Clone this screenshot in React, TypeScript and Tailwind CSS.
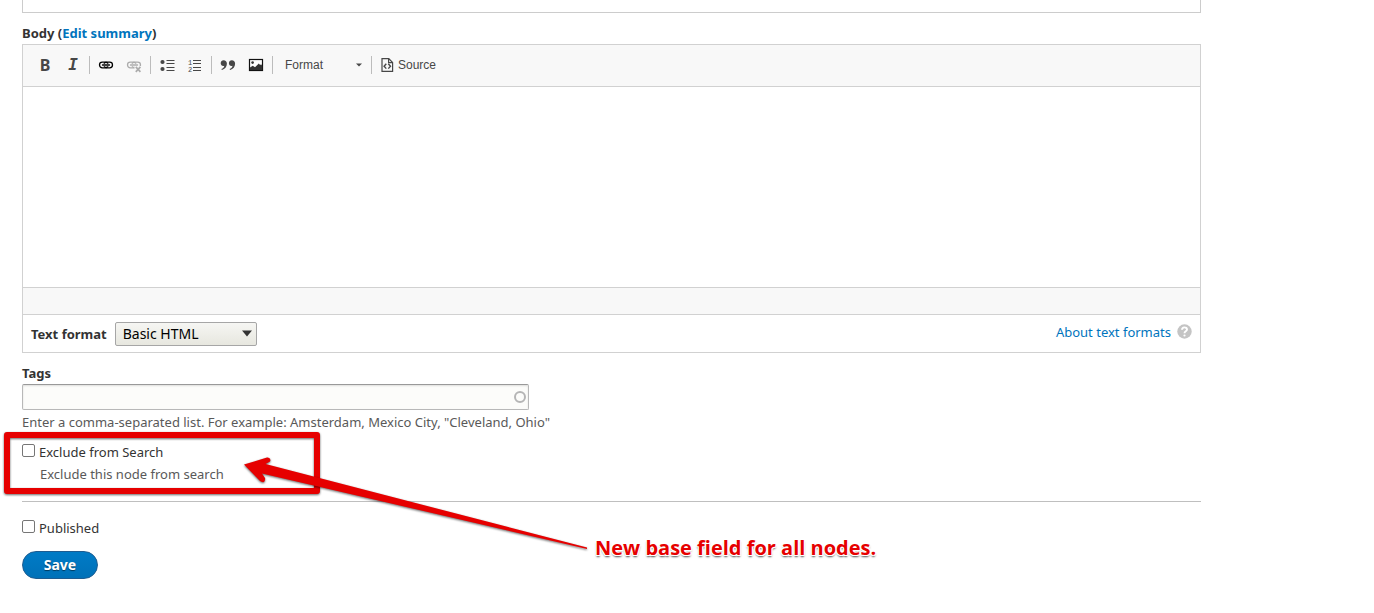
import { useState } from 'react';
import type { ReactNode } from 'react';

interface ToolButtonProps {
  label: string;
  disabled?: boolean;
  children: ReactNode;
}

function ToolButton({ label, disabled, children }: ToolButtonProps) {
  return (
    <button
      type="button"
      aria-label={label}
      disabled={disabled}
      className="flex h-7 w-7 items-center justify-center text-[#474747] disabled:opacity-30"
    >
      {children}
    </button>
  );
}

function Separator() {
  return <span className="mx-0.5 h-[18px] w-px bg-[#bcbcbc]" />;
}

function LinkIcon({ broken = false }: { broken?: boolean }) {
  return (
    <svg width="16" height="16" viewBox="0 0 16 16" fill="none" aria-hidden="true">
      <rect x="1.5" y="5.2" width="8.5" height="5.6" rx="2.8" stroke="#000" strokeWidth="1.3" />
      <rect x="6" y="5.2" width="8.5" height="5.6" rx="2.8" stroke="#000" strokeWidth="1.3" />
      <path d="M4.5 8h7" stroke="#f8f8f8" strokeWidth="2.6" strokeLinecap="round" />
      <path d="M4.5 8h7" stroke="#000" strokeWidth="1.3" strokeLinecap="round" />
      {broken && (
        <>
          <rect x="8.5" y="9" width="7" height="7" fill="#f8f8f8" />
          <path d="M9.8 9.8l4.600 5M14.400 9.800l-4.600 5" stroke="#000" strokeWidth="1.700" />
        </>
      )}
    </svg>
  );
}

function BulletListIcon() {
  return (
    <svg width="16" height="16" viewBox="0 0 16 16" fill="currentColor" aria-hidden="true">
      <circle cx="3.5" cy="5" r="2.1" />
      <circle cx="3.5" cy="12" r="2.1" />
      <path d="M7.500 3h8v1h-8zM7.500 6h8v1h-8zM7.500 10h8v1h-8zM7.500 13h8v1h-8z" />
    </svg>
  );
}

function NumberListIcon() {
  return (
    <svg width="16" height="16" viewBox="0 0 16 16" fill="currentColor" aria-hidden="true">
      <text x="1" y="8" fontSize="7" fontFamily="Liberation Mono, monospace">1</text>
      <text x="1" y="15" fontSize="7" fontFamily="Liberation Mono, monospace">2</text>
      <path d="M6 3h8v1H6zM6 6h8v1H6zM6 10h8v1H6zM6 13h8v1H6z" />
    </svg>
  );
}

function QuoteIcon() {
  return (
    <svg width="16" height="16" viewBox="0 0 16 16" fill="currentColor" aria-hidden="true">
      <path d="M3.6 3.2c2 0 3.3 1.4 3.3 3.6 0 3-1.9 5.4-5 6.2l-.5-1.1c1.7-.6 2.8-1.7 2.9-3.2-.3.1-.7.2-1 .2C1.800 8.900.700 7.700.700 6.200.700 4.400 2 3.200 3.600 3.200z" />
      <path d="M11.800 3.200c2 0 3.300 1.400 3.300 3.600 0 3-1.900 5.400-5 6.200l-.5-1.100c1.700-.6 2.800-1.700 2.900-3.200-.3.1-.7.2-1 .2-1.500 0-2.600-1.200-2.600-2.700 0-1.800 1.300-3 2.900-3z" />
    </svg>
  );
}

function ImageIcon() {
  return (
    <svg width="16" height="16" viewBox="0 0 16 16" aria-hidden="true">
      <rect x="1.500" y="2.500" width="13" height="11" fill="#fff" stroke="#111" strokeWidth="1.200" />
      <circle cx="4.600" cy="5.600" r="1.300" fill="#333" />
      <path d="M2 13v-2.500l2.800-1.700 2.200 1.400 3.800-3.700 1.300 1.600 1-.8 1.200 1.500V13z" fill="#333" />
    </svg>
  );
}

function SourceIcon() {
  return (
    <svg width="16" height="16" viewBox="0 0 16 16" fill="none" stroke="currentColor" aria-hidden="true">
      <path d="M3 1.700h6.800l3.800 3.800v8.800H3zM9.600 1.700v4h4" strokeWidth="1.200" />
      <path d="M7.300 6.800L5.100 9.200l2.200 2.400M9.300 6.800l2.200 2.400-2.200 2.400" strokeWidth="1.400" />
    </svg>
  );
}

function Toolbar() {
  return (
    <div className="flex h-[42px] items-center border-b border-[#d1d1d1] bg-[#f8f8f8] px-2 pb-0.5 font-['Liberation_Sans',Arial,sans-serif] text-xs text-[#474747]">
      <ToolButton label="Bold">
        <span className="font-['Noto_Sans',sans-serif] text-base font-bold">B</span>
      </ToolButton>
      <ToolButton label="Italic">
        <span className="font-['DejaVu_Sans_Mono',monospace] text-base font-bold italic">I</span>
      </ToolButton>
      <Separator />
      <ToolButton label="Link"><LinkIcon /></ToolButton>
      <ToolButton label="Unlink" disabled><LinkIcon broken /></ToolButton>
      <Separator />
      <ToolButton label="Bulleted list"><BulletListIcon /></ToolButton>
      <ToolButton label="Numbered list"><NumberListIcon /></ToolButton>
      <Separator />
      <ToolButton label="Block quote"><QuoteIcon /></ToolButton>
      <ToolButton label="Image"><ImageIcon /></ToolButton>
      <Separator />
      <div className="relative flex w-[94px] items-center">
        <select aria-label="Paragraph format" className="h-7 w-full appearance-none pl-2.5">
          <option>Format</option>
        </select>
        <svg className="pointer-events-none absolute right-1.5" width="8" height="4" viewBox="0 0 8 4" aria-hidden="true">
          <path d="M1 .5h6L4 3.500z" fill="#474747" />
        </svg>
      </div>
      <Separator />
      <button type="button" className="flex h-7 items-center gap-[3px] px-[5px]">
        <SourceIcon />
        Source
      </button>
    </div>
  );
}

function Annotation() {
  return (
    <div className="pointer-events-none absolute -left-[18px] -top-1">
      <div className="h-[62px] w-[316px] rounded-[3px] border-6 border-[#e60000] drop-shadow-[0_1px_1px_rgba(0,0,0,0.6)]" />
      <svg
        className="absolute left-[236px] top-5 drop-shadow-[0_1px_1px_rgba(0,0,0,0.6)]"
        width="350"
        height="100"
        viewBox="0 0 350 100"
        aria-hidden="true"
      >
        <path
          d="M4 12.500L27 5.500Q30 5 30.500 8L30 9.500 25.500 12 347 95.500 347 97 22 21.500 25 26Q25.500 28 24 30 22 30.500 20 29z"
          fill="#e60000"
        />
      </svg>
      <p className="absolute left-[591px] top-[102px] whitespace-nowrap font-['Open_Sans',sans-serif] text-xl leading-7 font-bold text-[#e60000] [text-shadow:-1px_-1px_0_#fff,1px_-1px_0_#fff,-1px_1px_0_#fff,1px_1px_0_#fff,0_2px_2px_rgba(0,0,0,0.7)]">
        New base field for all nodes.
      </p>
    </div>
  );
}

export default function App() {
  const [body, setBody] = useState('');
  const [tags, setTags] = useState('');

  return (
    <form
      className="min-h-screen bg-white pb-8 pl-[22px] pr-[173px] font-['Noto_Sans',sans-serif] text-[13px] leading-5 text-[#333]"
      onSubmit={(e) => e.preventDefault()}
    >
      <div className="h-[13px] border border-t-0 border-[#ccc]" />

      {/* Body */}
      <div className="mt-2.5 font-bold">
        <label htmlFor="body">Body</label> (<a href="#summary" className="text-[#0074bd]">Edit summary</a>)
      </div>
      <div className="mt-px border border-[#d1d1d1]">
        <Toolbar />
        <textarea
          id="body"
          value={body}
          onChange={(e) => setBody(e.target.value)}
          className="block h-[200px] w-full resize-none p-5 outline-none"
        />
        <div className="h-7 border-y border-[#d1d1d1] bg-[#f8f8f8]" />
        <div className="flex h-[37px] items-center px-2">
          <label htmlFor="format" className="mr-2 font-bold">Text format</label>
          <div className="relative flex items-center">
            <select
              id="format"
              className="h-6 w-[142px] appearance-none rounded-xs border border-[#a6a6a6] bg-linear-to-b from-[#f6f6f3] to-[#e7e7df] pl-[7px] text-sm leading-5 text-black"
            >
              <option>Basic HTML</option>
            </select>
            <svg className="pointer-events-none absolute right-[5px]" width="10" height="7" viewBox="0 0 10 7" aria-hidden="true">
              <path d="M0 .5h10L5 6.500z" fill="#333" />
            </svg>
          </div>
          <a href="#formats" className="ml-auto flex items-center gap-1.5 pb-1 text-[#0074bd]">
            About text formats
            <svg width="15" height="15" viewBox="0 0 15 15" aria-hidden="true">
              <circle cx="7.500" cy="7.500" r="7.200" fill="#c4c4c4" />
              <path d="M5 5.800c0-3.200 5-3.200 5-.3 0 1.800-2.500 1.800-2.500 3.700" fill="none" stroke="#fff" strokeWidth="1.900" />
              <circle cx="7.500" cy="11.500" r="1.100" fill="#fff" />
            </svg>
          </a>
        </div>
      </div>

      {/* Tags */}
      <div className="mt-2.5">
        <label htmlFor="tags" className="block font-bold">Tags</label>
        <div className="relative mt-px flex w-[507px] items-center">
          <input
            id="tags"
            type="text"
            value={tags}
            onChange={(e) => setTags(e.target.value)}
            className="h-[26px] w-full rounded-xs border border-[#b8b8b8] border-t-[#999] bg-[#fcfcfa] pl-2 pr-6 shadow-[inset_0_1px_2px_rgba(0,0,0,0.12)] outline-none"
          />
          <span className="absolute right-[3px] size-3 rounded-full border-2 border-[#b5b5b5]" />
        </div>
        <p className="mt-0.5 text-[#595959]">
          Enter a comma-separated list. For example: Amsterdam, Mexico City, "Cleveland, Ohio"
        </p>
      </div>

      {/* Exclude from search */}
      <div className="relative mt-1 border-b border-[#bfbfbf] pb-[17px] pt-1.5">
        <div className="flex items-start gap-1">
          <input
            id="exclude"
            type="checkbox"
            aria-describedby="exclude-help"
            className="mt-0.5 size-[13px] appearance-none rounded-xs border border-[#767676] bg-white checked:bg-[#0074bd]"
          />
          <label htmlFor="exclude">Exclude from Search</label>
        </div>
        <p id="exclude-help" className="mt-0.5 pl-[18px] text-[#595959]">Exclude this node from search</p>
        <Annotation />
      </div>

      <div className="mt-4 flex items-start gap-1">
        <input
          id="published"
          type="checkbox"
          className="mt-0.5 size-[13px] appearance-none rounded-xs border border-[#767676] bg-white checked:bg-[#0074bd]"
        />
        <label htmlFor="published">Published</label>
      </div>

      <button
        type="submit"
        className="mt-[13px] h-7 w-[76px] rounded-full border border-[#1e5c90] bg-linear-to-b from-[#007bc6] to-[#0071b8] text-sm leading-5 font-bold text-white [text-shadow:0_1px_1px_rgba(0,0,0,0.5)]"
      >
        Save
      </button>
    </form>
  );
}
